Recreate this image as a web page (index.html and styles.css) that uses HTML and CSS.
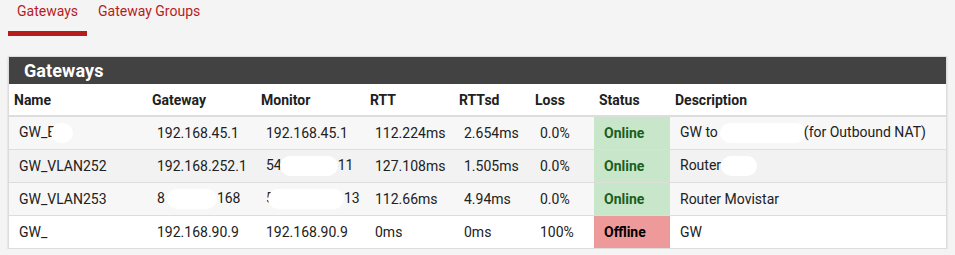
FILE: index.html
```html
<!DOCTYPE html>
<html>
<head>
<meta charset="utf-8">
<link rel="stylesheet" href="styles.css">
</head>
<body>
<ul class="tabs">
  <li class="tab active">Gateways</li>
  <li class="tab">Gateway Groups</li>
</ul>
<div class="panel">
  <div class="panel-heading">Gateways</div>
  <table class="gw">
    <colgroup>
      <col class="c-name"><col class="c-gw"><col class="c-mon"><col class="c-rtt"><col class="c-rttsd"><col class="c-loss"><col class="c-status"><col class="c-desc">
    </colgroup>
    <thead>
      <tr><th>Name</th><th>Gateway</th><th>Monitor</th><th>RTT</th><th>RTTsd</th><th>Loss</th><th>Status</th><th>Description</th></tr>
    </thead>
    <tbody>
      <tr class="r1">
        <td>GW_E<span class="blob b-name"></span></td>
        <td>192.168.45.1</td>
        <td>192.168.45.1</td>
        <td>112.224ms</td>
        <td>2.654ms</td>
        <td>0.0%</td>
        <td class="online">Online</td>
        <td>GW to<span class="blob b-desc1"></span>(for Outbound NAT)</td>
      </tr>
      <tr class="r2">
        <td>GW_VLAN252</td>
        <td>192.168.252.1</td>
        <td>54<span class="blob b-mon2"></span>11</td>
        <td>127.108ms</td>
        <td>1.505ms</td>
        <td>0.0%</td>
        <td class="online">Online</td>
        <td>Router<span class="blob b-desc2"></span></td>
      </tr>
      <tr class="r3">
        <td>GW_VLAN253</td>
        <td>8<span class="blob b-gw3"></span>168</td>
        <td>5<span class="blob b-mon3"></span>13</td>
        <td>112.66ms</td>
        <td>4.94ms</td>
        <td>0.0%</td>
        <td class="online">Online</td>
        <td>Router Movistar</td>
      </tr>
      <tr class="r4">
        <td>GW_</td>
        <td>192.168.90.9</td>
        <td>192.168.90.9</td>
        <td>0ms</td>
        <td>0ms</td>
        <td>100%</td>
        <td class="offline">Offline</td>
        <td>GW</td>
      </tr>
    </tbody>
  </table>
</div>
</body>
</html>
```
FILE: styles.css
```css
html, body {
  margin: 0;
  padding: 0;
  background: #f4f4f4;
  font-family: Roboto, "Liberation Sans", sans-serif;
  font-size: 14px;
  color: #212121;
}
.tabs {
  list-style: none;
  margin: 0;
  padding: 0 0 0 8px;
  display: flex;
  height: 36px;
}
.tab {
  color: #b71c1c;
  padding: 3px 9px 0 9px;
  margin-right: 2px;
  line-height: 17px;
  box-sizing: border-box;
  height: 36px;
}
.tab.active {
  border-bottom: 5px solid #b71c1c;
}
.panel {
  margin: 20px 8px 0 8px;
  background: #fff;
  border: 1px solid #dcdcdc;
  box-shadow: 0 1px 2px rgba(0,0,0,0.15);
}
.panel-heading {
  background: #424242;
  color: #fff;
  font-weight: bold;
  font-size: 18px;
  height: 27px;
  line-height: 27px;
  padding-left: 15px;
  letter-spacing: 0.1px;
}
.gw {
  width: 100%;
  border-collapse: collapse;
  table-layout: fixed;
}
.c-name { width: 138px; }
.c-gw { width: 109px; }
.c-mon { width: 109px; }
.c-rtt { width: 89px; }
.c-rttsd { width: 76px; }
.c-loss { width: 64px; }
.c-status { width: 76px; }
.gw th {
  text-align: left;
  font-weight: bold;
  padding: 0 5px;
  height: 31px;
  border-bottom: 2px solid #dddddd;
  white-space: nowrap;
}
.gw td {
  padding: 0 0 0 10px;
  height: 32px;
  border-top: 1px solid #dddddd;
  white-space: nowrap;
}
.gw tbody tr:first-child td { border-top: none; }
.r1 td, .r3 td { background: #f7f7f7; }
.r2 td { background: #f2f2f2; }
.r4 td { background: #ffffff; }
.gw td.online {
  background: #c8e6c9;
  color: #1b5e20;
  font-weight: bold;
}
.gw td.offline {
  background: #ef9a9a;
  color: #000;
  font-weight: bold;
}
.blob {
  display: inline-block;
  background: #fff;
  height: 20px;
  border-radius: 10px;
  vertical-align: middle;
}
.b-name { width: 22px; margin-left: -4px; }
.b-mon2 { width: 58px; margin-left: -2px; }
.b-gw3 { width: 50px; margin-left: 2px; }
.b-mon3 { width: 76px; margin-left: -6px; }
.b-desc1 { width: 86px; margin-left: 2px; margin-right: -2px; }
.b-desc2 { width: 36px; margin-left: 0; }
```
